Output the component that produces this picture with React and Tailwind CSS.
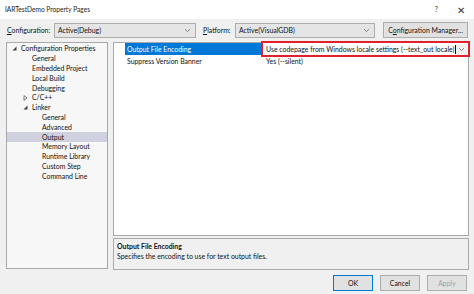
import React from 'react';

const TREE = [
  { label: 'Configuration Properties', level: 0, arrow: 'open' },
  { label: 'General', level: 1 },
  { label: 'Embedded Project', level: 1 },
  { label: 'Local Build', level: 1 },
  { label: 'Debugging', level: 1 },
  { label: 'C/C++', level: 1, arrow: 'closed' },
  { label: 'Linker', level: 1, arrow: 'open' },
  { label: 'General', level: 2 },
  { label: 'Advanced', level: 2 },
  { label: 'Output', level: 2, selected: true },
  { label: 'Memory Layout', level: 2 },
  { label: 'Runtime Library', level: 2 },
  { label: 'Custom Step', level: 2 },
  { label: 'Command Line', level: 2 },
];

const INDENT = ['pl-[12px]', 'pl-[23px]', 'pl-[33px]'];
const ARROW_POS = ['left-[5px]', 'left-[16px]', 'left-[26px]'];

function Chevron() {
  return (
    <svg width="7" height="5" viewBox="0 0 7 5" className="shrink-0">
      <path d="M1 1.2 L3.5 3.6 L6 1.2" fill="none" stroke="#7a7a7a" strokeWidth="0.9" />
    </svg>
  );
}

function TreeArrow({ kind }) {
  if (kind === 'open') {
    return (
      <svg width="5" height="5" viewBox="0 0 5 5">
        <path d="M4.5 0.5 L4.5 4.5 L0.5 4.5 Z" fill="#404040" />
      </svg>
    );
  }
  return (
    <svg width="5" height="6" viewBox="0 0 5 6">
      <path d="M1 0.6 L4 3 L1 5.4 Z" fill="none" stroke="#606060" strokeWidth="0.8" />
    </svg>
  );
}

function Combo({ value, className }) {
  return (
    <div className={`flex h-[15px] items-center justify-between border border-[#adadad] bg-[#e5e5e5] pl-[3px] pr-[4px] ${className}`}>
      <span>{value}</span>
      <Chevron />
    </div>
  );
}

function Button({ children, primary, disabled }) {
  return (
    <div
      className={`flex h-[16px] w-[40px] items-center justify-center border bg-[#e1e1e1] ${
        primary ? 'border-[#0078d7]' : 'border-[#adadad]'
      } ${disabled ? 'text-[#a0a0a0]' : 'text-[#111]'}`}
    >
      {children}
    </div>
  );
}

export default function App() {
  return (
    <div
      className="flex h-[294px] w-[474px] flex-col overflow-hidden whitespace-nowrap bg-[#f0f0f0] text-[6.9px] leading-none text-[#111]"
      style={{ fontFamily: 'Lato, "Liberation Sans", sans-serif' }}
    >
      {/* Title bar */}
      <div className="flex h-[19px] items-center justify-between bg-white pl-[5px] pr-[9px]">
        <span className="text-[6.6px] text-[#222]">IARTestDemo Property Pages</span>
        <div className="flex items-center gap-[19px] text-[#333]">
          <span className="text-[7px]">?</span>
          <span className="text-[10px]">✕</span>
        </div>
      </div>

      {/* Configuration row */}
      <div className="mt-[3px] flex h-[16px] items-center pl-[7px]">
        <span className="w-[47px]">
          <span className="underline">C</span>onfiguration:
        </span>
        <Combo value="Active(Debug)" className="w-[142px]" />
        <span className="ml-[7px] w-[32px]">
          <span className="underline">P</span>latform:
        </span>
        <Combo value="Active(VisualGDB)" className="w-[140px]" />
        <div className="ml-[8px] flex h-[16px] w-[85px] items-center justify-center border border-[#adadad] bg-[#e1e1e1]">
          C<span className="underline">o</span>nfiguration Manager...
        </div>
      </div>

      {/* Main area */}
      <div className="mt-[4px] flex pl-[6px]">
        {/* Tree */}
        <div className="h-[227px] w-[102px] border border-[#a9a9a9] bg-[#f7f7f7] pt-[1px]">
          {TREE.map((item, i) => (
            <div
              key={i}
              className={`relative flex h-[9.8px] items-center ${INDENT[item.level]} ${
                item.selected ? 'bg-[#cfd1de]' : ''
              }`}
            >
              {item.arrow && (
                <span className={`absolute top-[2px] ${ARROW_POS[item.level]}`}>
                  <TreeArrow kind={item.arrow} />
                </span>
              )}
              <span className="pl-[2px]">{item.label}</span>
            </div>
          ))}
        </div>

        {/* Right column */}
        <div className="ml-[5px] flex w-[356px] flex-col">
          <div className="h-[194px] border border-[#a9a9a9] bg-white">
            <div className="flex h-[12px]">
              <div className="w-[11px]" />
              <div className="flex w-[137px] items-center bg-[#0078d7] pl-[2px] text-white">
                Output File Encoding
              </div>
              <div className="relative flex-1">
                <div className="absolute -left-[1px] -top-[2px] flex h-[16px] w-[209px] items-center justify-between border-2 border-[#e0202b] bg-white pl-[3px] pr-[1px]">
                  <span className="flex items-center">
                    Use codepage from Windows locale settings (--text_out locale)
                    <span className="ml-[1px] inline-block h-[9px] w-px bg-black" />
                  </span>
                  <div className="flex h-[11px] w-[11px] items-center justify-center bg-[#f0f0f0]">
                    <Chevron />
                  </div>
                </div>
              </div>
            </div>
            <div className="mt-[1px] flex h-[10px] items-center">
              <div className="w-[11px]" />
              <div className="w-[137px] pl-[2px]">Suppress Version Banner</div>
              <div className="pl-[4px]">Yes (--silent)</div>
            </div>
          </div>
          <div className="mt-[2px] h-[32px] border border-[#a9a9a9] bg-[#f0f0f0] px-[3px] pt-[4px]">
            <div className="font-bold">Output File Encoding</div>
            <div className="mt-[3px]">Specifies the encoding to use for text output files.</div>
          </div>
        </div>
      </div>

      {/* Buttons */}
      <div className="mt-[5px] flex justify-end gap-[7px] pr-[7px]">
        <Button primary>OK</Button>
        <Button>Cancel</Button>
        <Button disabled>Apply</Button>
      </div>
    </div>
  );
}
